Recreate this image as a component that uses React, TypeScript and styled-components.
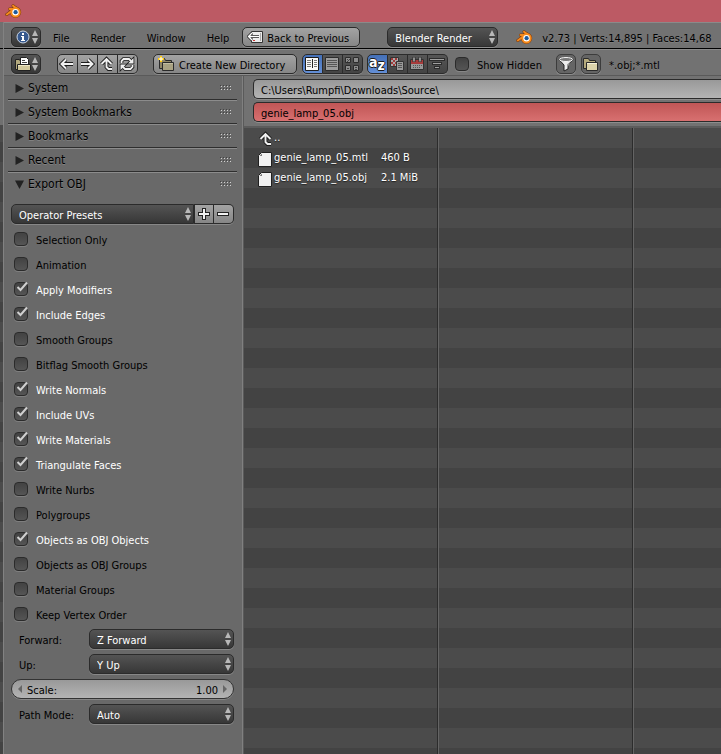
import React from "react";
import styled, { createGlobalStyle, css } from "styled-components";

const Global = createGlobalStyle`
  *, *::before, *::after { box-sizing: border-box; }
  html, body, #root { margin: 0; min-height: 100vh; }
  body { background: #4b4b4b; overflow: hidden; }
  body, button, input, select {
    font: 11px/20px "DejaVu Sans Condensed", "DejaVu Sans", sans-serif;
    color: #000;
  }
  svg { display: block; flex: none; }
`;

const Window = styled.div`
  display: flex;
  flex-direction: column;
  min-height: 100vh;
`;

const TitleBar = styled.header`
  display: flex;
  align-items: center;
  height: 22px;
  padding-left: 5px;
  background: #bc5a64;
`;

const Workspace = styled.div`
  display: grid;
  grid-template-columns: 3px minmax(0, 1fr);
  flex: 1;
`;

const Neighbour = styled.div`
  display: grid;
  grid-template-rows: 27px 76px 1fr;
  background: repeating-linear-gradient(#434343 0 20px, #4b4b4b 20px 40px);
  &::before, &::after { content: ""; background: #707070; }
  &::before { border-bottom: 1px solid #000; }
`;

const Screen = styled.div`
  display: flex;
  flex-direction: column;
  min-width: 0;
  border-left: 1px solid #828282;
`;

const Bar = styled.div<{ $last?: boolean }>`
  display: flex;
  align-items: center;
  height: 27px;
  padding: 3px 0 0 7px;
  overflow: hidden;
  white-space: nowrap;
  background: #727272;
  border-top: 1px solid #8a8a8a;
  border-bottom: 1px solid ${(p) => (p.$last ? "#5a5a5a" : "#000")};
`;

const control = css`
  display: flex;
  align-items: center;
  flex: none;
  height: 20px;
  margin: 0;
  padding: 0 4px;
  border: 1px solid #2b2b2b;
  border-radius: 5px;
  box-shadow: 0 1px 0 rgba(255, 255, 255, 0.2);
  line-height: 18px;
`;

const darkFace = css`
  color: #fff;
  background: linear-gradient(#545454, #373737);
`;

const Caption = styled.span`
  line-height: 16px;
  padding-top: 3px;
`;

const IconMenu = styled.button`
  ${control}
  ${darkFace}
  justify-content: space-between;
  width: 30px;
  padding: 0 1px 0 3px;
`;

const Menus = styled.nav`
  display: flex;
  gap: 21px;
  margin: 0 13px 0 12px;
`;

const MenuItem = styled.button`
  padding: 3px 0 0;
  border: 0;
  background: none;
  line-height: 16px;
  text-shadow: 0 1px 0 #808080;
`;

const Button = styled.button<{ $width: number }>`
  ${control}
  gap: 4px;
  width: ${(p) => p.$width}px;
  background: linear-gradient(#a3a3a3, #868686);
`;

const Picker = styled.div<{ $width?: number; $joined?: boolean }>`
  position: relative;
  display: flex;
  flex: ${(p) => (p.$width ? "none" : "1")};
  width: ${(p) => (p.$width ? `${p.$width}px` : "auto")};
  select {
    ${control}
    ${darkFace}
    flex: 1;
    min-width: 0;
    padding: 2px 16px 0 7px;
    appearance: none;
    border-radius: ${(p) => (p.$joined ? "5px 0 0 5px" : "5px")};
  }
  svg { position: absolute; right: 2px; top: 3px; pointer-events: none; }
`;

const Group = styled.div<{ $after: number }>`
  display: flex;
  flex: none;
  margin-right: ${(p) => p.$after}px;
`;

const Segment = styled.button<{ $tone: "light" | "dark" | "on" }>`
  ${control}
  width: 20px;
  padding: 0 0 0 1px;
  border-radius: 0;
  background: ${(p) =>
    ({
      light: "linear-gradient(#a3a3a3, #868686)",
      dark: "linear-gradient(#565656, #444444)",
      on: "linear-gradient(#4470b8, #648fd6)",
    })[p.$tone]};
  & + & { border-left-width: 0; }
  &:first-child { border-radius: 5px 0 0 5px; width: 21px; }
  &:last-child { border-radius: 0 5px 5px 0; }
`;

const Toggle = styled.button<{ $after: number }>`
  ${control}
  justify-content: center;
  width: 20px;
  padding: 0;
  margin-right: ${(p) => p.$after}px;
  border-color: #3c3c3c;
  background: #656565;
`;

const Info = styled.span`
  padding-top: 3px;
  line-height: 16px;
  text-shadow: 0 1px 0 #808080;
`;

const CheckLabel = styled.label<{ $on?: boolean }>`
  display: flex;
  align-items: center;
  flex: none;
  gap: 8px;
  height: 20px;
  color: ${(p) => (p.$on ? "#fff" : "#000")};
`;

const CheckBox = styled.span`
  position: relative;
  display: flex;
  width: 14px;
  height: 14px;
  input {
    width: 14px;
    height: 14px;
    margin: 0;
    appearance: none;
    border: 1px solid #2b2b2b;
    border-radius: 4px;
    background: linear-gradient(#424242, #555555);
    box-shadow: 0 1px 0 rgba(255, 255, 255, 0.15);
  }
  svg { position: absolute; left: 2px; top: -1px; pointer-events: none; }
`;

const Body = styled.div`
  display: grid;
  grid-template-columns: 239px minmax(0, 1fr);
  flex: 1;
`;

const Sidebar = styled.aside`
  background: #696969;
  border-right: 1px solid #808080;
  padding: 0 5px 20px 4px;
`;

const PanelHeader = styled.button<{ $open?: boolean }>`
  display: flex;
  align-items: center;
  gap: 4px;
  width: 100%;
  height: 24px;
  padding: ${(p) => (p.$open ? "0 5px 0 7px" : "1px 5px 0 7px")};
  border: 0;
  border-bottom: ${(p) => (p.$open ? "0" : "1px solid #2e2e2e")};
  box-shadow: ${(p) => (p.$open ? "none" : "0 1px 0 #8c8c8c")};
  background: none;
  font-size: 12px;
  text-align: left;
  text-shadow: 0 1px 0 #808080;
  span { flex: 1; }
`;

const Options = styled.form`
  display: flex;
  flex-direction: column;
  gap: 5px;
  margin: 0;
  padding: 8px 3px 0 3px;
`;

const CheckList = styled.div`
  display: flex;
  flex-direction: column;
  gap: 5px;
  padding-left: 3px;
`;

const Field = styled.div`
  display: flex;
  align-items: center;
  height: 20px;
  label { width: 78px; padding: 3px 0 0 8px; line-height: 16px; }
`;

const NumberField = styled.div`
  ${control}
  border-radius: 10px;
  border-color: #333;
  padding: 0 6px;
  gap: 5px;
  background: linear-gradient(#999, #b4b4b4);
  label { padding-top: 3px; line-height: 16px; }
  input {
    flex: 1;
    min-width: 0;
    height: 18px;
    padding: 3px 0 0;
    border: 0;
    background: none;
    text-align: right;
    outline: none;
  }
`;

const Browser = styled.main`
  display: flex;
  flex-direction: column;
  min-width: 0;
  border-left: 1px solid #5a5a5a;
`;

const Paths = styled.div`
  display: flex;
  flex-direction: column;
  gap: 3px;
  padding: 3px 0 4px 9px;
  background: #727272;
  border-bottom: 2px solid #5c5c5c;
`;

const PathInput = styled.input<{ $warn?: boolean }>`
  ${control}
  width: 100%;
  padding: 2px 7px 0;
  border-right: 0;
  border-radius: 5px 0 0 5px;
  outline: none;
  background: ${(p) =>
    p.$warn
      ? "linear-gradient(#c05656, #d87070)"
      : "linear-gradient(#999, #b4b4b4)"};
`;

const Files = styled.div`
  flex: 1;
  display: grid;
  grid-template-columns: 194px 195px 1fr;
  background: repeating-linear-gradient(#4b4b4b 0 20px, #434343 20px 40px);
`;

const Column = styled.ul`
  margin: 0;
  padding: 0;
  list-style: none;
  border-right: 1px solid #2c2c2c;
  box-shadow: 1px 0 0 #646464;
  &:last-child { border: 0; box-shadow: none; }
`;

const FileRow = styled.li`
  display: grid;
  grid-template-columns: 16px 107px 1fr;
  align-items: center;
  height: 20px;
  padding: 0 0 0 14px;
  color: #fff;
  text-shadow: 0 1px 1px #222;
  span { padding-bottom: 2px; }
`;

const UpDown = () => (
  <svg width="8" height="14" viewBox="0 0 8 14" fill="#b8b8b8">
    <path d="M4 0 7 6H1zM4 14 1 8h6z" />
  </svg>
);

const BlenderLogo = () => (
  <svg width="17" height="14" viewBox="0 0 17 14">
    <g fill="none" stroke="#7a3a10" strokeWidth="3" strokeLinecap="round">
      <path d="M4.500 5h5M8 1.800l5 3.800M1.800 10.500 6.500 7" />
      <circle cx="10.500" cy="8.200" r="4.200" />
    </g>
    <g fill="none" stroke="#f58a1c" strokeWidth="2" strokeLinecap="round">
      <path d="M4.500 5h5M8 1.800l5 3.800M1.800 10.500 6.500 7" />
      <circle cx="10.500" cy="8.200" r="4.200" fill="#fff" />
    </g>
    <circle cx="10.600" cy="8.200" r="2.100" fill="#1c5a9c" />
  </svg>
);

const InfoIcon = () => (
  <svg width="16" height="14" viewBox="0 0 16 14">
    <circle cx="8" cy="7" r="6" fill="#35588e" stroke="#c9d4e4" />
    <path d="M7 3h2v2H7zM6 6h3v4h1v1H6v-1h1V7H6z" fill="#fff" />
  </svg>
);

const FileBrowserIcon = () => (
  <svg width="16" height="16" viewBox="0 0 16 16">
    <path d="M.500 3.500h4l1 2v8h-5z" fill="#b3a97e" stroke="#222" />
    <path d="M5.500 1.500h6l2 2v6h-8z" fill="#fff" stroke="#222" />
    <path d="M7 4.500h3M7 6.500h5" stroke="#444" />
    <path d="M2.500 8.500h13v6h-13z" fill="#d2c89c" stroke="#222" />
    <path d="M3 9.500h12" stroke="#ece5c4" />
  </svg>
);

const arrowPaths = {
  back: "M14 8H3M7 3.5 2.5 8 7 12.5",
  forward: "M2 8h11M9 3.5 13.5 8 9 12.5",
  parent: "M13 13H9.500L7.500 11V3.500M2.500 8 7.500 3l5 5",
};

const Arrow = ({ kind }: { kind: keyof typeof arrowPaths }) => (
  <svg width="16" height="16" viewBox="0 0 16 16" fill="none">
    <path d={arrowPaths[kind]} stroke="#1c1c1c" strokeWidth="3.8" />
    <path d={arrowPaths[kind]} stroke="#f0f0f0" strokeWidth="1.9" />
  </svg>
);

const Refresh = () => {
  const shafts = "M2.500 7V5L4.500 3H10L12 5M13.500 9v2l-2 2H6L4 11";
  const heads = "M14.500 2v5.500H9zM1.500 14V8.500H7z";
  return (
    <svg width="16" height="16" viewBox="0 0 16 16" fill="none">
      <path d={shafts} stroke="#1c1c1c" strokeWidth="3.600" />
      <path d={heads} fill="#1c1c1c" stroke="#1c1c1c" strokeWidth="1.600" />
      <path d={shafts} stroke="#f0f0f0" strokeWidth="1.800" />
      <path d={heads} fill="#f0f0f0" />
    </svg>
  );
};

const BackIcon = () => (
  <svg width="16" height="14" viewBox="0 0 16 14">
    <path d="M4.500 1.500h11v11h-11z" fill="#ececec" stroke="#333" />
    <path d="M13.500 3v8" stroke="#aaa" />
    <path d="M12 6.500H2M5 3 1.500 6.500 5 10" fill="none" stroke="#222" strokeWidth="3" />
    <path d="M12 6.500H2M5 3 1.500 6.500 5 10" fill="none" stroke="#fff" strokeWidth="1.400" />
    <path d="M6 10.500h2" stroke="#c33" />
  </svg>
);

const Folder = ({ star }: { star?: boolean }) => (
  <svg width="17" height="16" viewBox="0 0 17 16">
    <path d="M1.500 12.500v-10h5l1 2h6v8z" fill={star ? "#8f8667" : "#b5aa7c"} stroke="#2a2a2a" />
    <path d="M4.500 6.500h11v8h-11z" fill={star ? "#a9a283" : "#dcd3aa"} stroke="#2a2a2a" />
    <path d="M5 7.500h10" stroke={star ? "#c4bea2" : "#f6f1da"} />
    {star && <path d="M3 0v6M0 3h6" stroke="#ffc800" strokeWidth="2" />}
    {star && <path d="M3 1v4M1 3h4" stroke="#fff" />}
  </svg>
);

const ShortList = () => (
  <svg width="16" height="16" viewBox="0 0 16 16">
    <path d="M1.500 1.500h13v13h-13z" fill="#f8f8f8" stroke="#1c1c1c" />
    <path d="M3 4.500h4M3 6.500h4M3 8.500h4M3 10.500h4M10 4.500h3M10 6.500h3M10 8.500h3M10 10.500h3" stroke="#777" />
    <path d="M8.500 3v9" stroke="#222" />
  </svg>
);

const LongList = () => (
  <svg width="16" height="16" viewBox="0 0 16 16">
    <path d="M1.500 1.500h13v13h-13z" fill="#9c9c9c" stroke="#2c2c2c" />
    <path d="M3 4.500h10M3 6.500h10M3 8.500h10M3 10.500h10" stroke="#555" />
  </svg>
);

const Thumbs = () => (
  <svg width="16" height="16" viewBox="0 0 16 16" fill="#8c8c8c" stroke="#2c2c2c">
    <path d="M1.500 1.500h5v5h-5zM9.500 1.500h5v5h-5zM1.500 9.500h5v5h-5zM9.500 9.500h5v5h-5z" />
    <path d="M3 3h1v1H3zM4 4h1v1H4zM5 3h1v1H5zM3 5h1v1H3zM3 12h2v1H3zM11 11h2v1h-2zM11 13h2v1h-2z" fill="#444" stroke="none" />
  </svg>
);

const AzGlyph = styled.span`
  display: flex;
  font: bold 14px/14px "DejaVu Sans Condensed", "DejaVu Sans", sans-serif;
  color: #fff;
  text-shadow: 1px 0 #1b1b1b, -1px 0 #1b1b1b, 0 1px #1b1b1b, 0 -1px #1b1b1b;
  span:first-child { padding-bottom: 4px; }
  span:last-child { padding-top: 3px; }
`;

const TypeSort = () => (
  <svg width="16" height="16" viewBox="0 0 16 16">
    <path d="M1.500 1.500h8v9h-8z" fill="#aaa" stroke="#333" />
    <path d="M2 2h2v2H2zM6 2h2v2H6zM4 4h2v2H4zM2 6h2v2H2zM6 6h2v2H6zM4 8h2v2H4z" fill="#a33a3a" />
    <path d="M7.500 5.500h7v9h-7z" fill="#999" stroke="#333" />
    <path d="M9 7.500h4M9 9.500h4M9 11.500h4" stroke="#555" />
  </svg>
);

const DateSort = () => (
  <svg width="16" height="16" viewBox="0 0 16 16">
    <path d="M1.500 3.500h13v10h-13z" fill="#999" stroke="#333" />
    <path d="M2 4h12v4H2z" fill="#a83c3c" />
    <path d="M5 1v5M11 1v5" stroke="#2c2c2c" strokeWidth="3" />
    <path d="M5 1.500v4M11 1.500v4" stroke="#bbb" strokeWidth="1.400" />
    <path d="M4 9.500h9M4 11.500h7" stroke="#555" strokeDasharray="1 1" />
  </svg>
);

const SizeSort = () => (
  <svg width="16" height="16" viewBox="0 0 16 16">
    <path d="M0 3.500h16M3 7.500h10M5 11.500h6" stroke="#2c2c2c" strokeWidth="3" />
    <path d="M1 3.500h14M4 7.500h8M6 11.500h4" stroke="#a0a0a0" />
  </svg>
);

const Funnel = () => (
  <svg width="16" height="16" viewBox="0 0 16 16">
    <path d="M1 3.500 6 9v6l4-2V9l5-5.500z" fill="#ececec" stroke="#222" />
    <path d="M9 8.500v4l3.500-7z" fill="#999" />
    <ellipse cx="8" cy="3.500" rx="6.500" ry="2" fill="#777" stroke="#f4f4f4" />
  </svg>
);

const Sign = ({ plus }: { plus?: boolean }) => {
  const d = plus ? "M8 4v8M4 8h8" : "M4 8h8";
  return (
    <svg width="16" height="16" viewBox="0 0 16 16">
      <path d={d} stroke="#222" strokeWidth="4" strokeLinecap="square" />
      <path d={d} stroke="#f2f2f2" strokeWidth="2" strokeLinecap="square" />
    </svg>
  );
};

const Paper = () => (
  <svg width="14" height="16" viewBox="0 0 14 16">
    <path d="M.500 4.500l3-3h10v14H.500z" fill="#f0f0f0" stroke="#202020" />
    <path d="M1.500 5h2.500V2.500z" fill="#777" />
  </svg>
);

const Grip = () => (
  <svg width="12" height="6" viewBox="0 0 12 6">
    {[0, 3, 6, 9].map((x) =>
      [0, 3].map((y) => (
        <g key={`${x}-${y}`}>
          <path d={`M${x} ${y}h1v1h-1z`} fill="#444" />
          <path d={`M${x + 1} ${y + 1}h1v1h-1z`} fill="#d0d0d0" />
        </g>
      ))
    )}
  </svg>
);

const Disclosure = ({ open }: { open?: boolean }) => (
  <svg width="9" height="9" viewBox="0 0 9 9" fill="#222">
    <path d={open ? "M0 .500h9L4.500 9z" : "M.500 0v9L9 4.500z"} />
  </svg>
);

const Check = ({ label, on }: { label: string; on?: boolean }) => (
  <CheckLabel $on={on}>
    <CheckBox>
      <input type="checkbox" defaultChecked={on} />
      {on && (
        <svg width="13" height="12" viewBox="0 0 13 12">
          <path d="M1.500 6 4.500 9 11 1.500" fill="none" stroke="#d0d0d0" strokeWidth="2" />
        </svg>
      )}
    </CheckBox>
    <Caption>{label}</Caption>
  </CheckLabel>
);

const Select = ({ id, label, value, width, joined }: {
  id?: string; label?: string; value: string; width?: number; joined?: boolean;
}) => (
  <Picker $width={width} $joined={joined}>
    <select id={id} aria-label={label}><option>{value}</option></select>
    <UpDown />
  </Picker>
);

const PresetRow = styled.div`
  display: flex;
`;

const options: [string, boolean][] = [
  ["Selection Only", false],
  ["Animation", false],
  ["Apply Modifiers", true],
  ["Include Edges", true],
  ["Smooth Groups", false],
  ["Bitflag Smooth Groups", false],
  ["Write Normals", true],
  ["Include UVs", true],
  ["Write Materials", true],
  ["Triangulate Faces", true],
  ["Write Nurbs", false],
  ["Polygroups", false],
  ["Objects as OBJ Objects", true],
  ["Objects as OBJ Groups", false],
  ["Material Groups", false],
  ["Keep Vertex Order", false],
];

const files = [
  ["genie_lamp_05.mtl", "460 B"],
  ["genie_lamp_05.obj", "2.1 MiB"],
];

const Spacer = styled.div<{ $w: number }>`
  flex: none;
  width: ${(p) => p.$w}px;
`;

export default function App() {
  return (
    <Window>
      <Global />
      <TitleBar><BlenderLogo /></TitleBar>
      <Workspace>
        <Neighbour />
        <Screen>
          <Bar>
            <IconMenu aria-label="Editor type: Info"><InfoIcon /><UpDown /></IconMenu>
            <Menus>
              {["File", "Render", "Window", "Help"].map((m) => <MenuItem key={m}>{m}</MenuItem>)}
            </Menus>
            <Button $width={118}><BackIcon /><Caption>Back to Previous</Caption></Button>
            <Spacer $w={27} />
            <Select label="Render engine" value="Blender Render" width={111} />
            <Spacer $w={18} />
            <BlenderLogo />
            <Spacer $w={9} />
            <Info>v2.73 | Verts:14,895 | Faces:14,68</Info>
          </Bar>
          <Bar $last>
            <IconMenu aria-label="Editor type: File Browser"><FileBrowserIcon /><UpDown /></IconMenu>
            <Spacer $w={16} />
            <Group $after={15}>
              <Segment $tone="light" aria-label="Back"><Arrow kind="back" /></Segment>
              <Segment $tone="light" aria-label="Forward"><Arrow kind="forward" /></Segment>
              <Segment $tone="light" aria-label="Parent folder"><Arrow kind="parent" /></Segment>
              <Segment $tone="light" aria-label="Refresh"><Refresh /></Segment>
            </Group>
            <Button $width={144}><Folder star /><Caption>Create New Directory</Caption></Button>
            <Spacer $w={5} />
            <Group $after={4}>
              <Segment $tone="on" aria-label="Short list"><ShortList /></Segment>
              <Segment $tone="dark" aria-label="Long list"><LongList /></Segment>
              <Segment $tone="dark" aria-label="Thumbnails"><Thumbs /></Segment>
            </Group>
            <Group $after={7}>
              <Segment $tone="on" aria-label="Sort by name"><AzGlyph><span>a</span><span>z</span></AzGlyph></Segment>
              <Segment $tone="dark" aria-label="Sort by type"><TypeSort /></Segment>
              <Segment $tone="dark" aria-label="Sort by date"><DateSort /></Segment>
              <Segment $tone="dark" aria-label="Sort by size"><SizeSort /></Segment>
            </Group>
            <Check label="Show Hidden" />
            <Spacer $w={14} />
            <Toggle $after={5} aria-label="Filter"><Funnel /></Toggle>
            <Toggle $after={8} aria-label="Show folders"><Folder /></Toggle>
            <Info>*.obj;*.mtl</Info>
          </Bar>
          <Body>
            <Sidebar>
              {["System", "System Bookmarks", "Bookmarks", "Recent"].map((p) => (
                <PanelHeader key={p}><Disclosure /><span>{p}</span><Grip /></PanelHeader>
              ))}
              <PanelHeader $open><Disclosure open /><span>Export OBJ</span><Grip /></PanelHeader>
              <Options>
                <PresetRow>
                  <Select label="Operator presets" value="Operator Presets" joined />
                  <Segment type="button" $tone="light" aria-label="Add preset"><Sign plus /></Segment>
                  <Segment type="button" $tone="light" aria-label="Remove preset"><Sign /></Segment>
                </PresetRow>
                <CheckList>
                  {options.map(([label, on]) => <Check key={label} label={label} on={on} />)}
                </CheckList>
                <Field><label htmlFor="forward">Forward:</label><Select id="forward" value="Z Forward" /></Field>
                <Field><label htmlFor="up">Up:</label><Select id="up" value="Y Up" /></Field>
                <NumberField>
                  <svg width="4" height="8" viewBox="0 0 4 8" fill="#666"><path d="M4 0v8L0 4z" /></svg>
                  <label htmlFor="scale">Scale:</label>
                  <input id="scale" defaultValue="1.00" />
                  <svg width="4" height="8" viewBox="0 0 4 8" fill="#666"><path d="M0 0v8l4-4z" /></svg>
                </NumberField>
                <Field><label htmlFor="path">Path Mode:</label><Select id="path" value="Auto" /></Field>
              </Options>
            </Sidebar>
            <Browser>
              <Paths>
                <PathInput aria-label="Directory" defaultValue={"C:\\Users\\Rumpfi\\Downloads\\Source\\"} />
                <PathInput $warn aria-label="File name" defaultValue="genie_lamp_05.obj" />
              </Paths>
              <Files>
                <Column>
                  <FileRow><Arrow kind="parent" /><span>..</span></FileRow>
                  {files.map(([name, size]) => (
                    <FileRow key={name}><Paper /><span>{name}</span><span>{size}</span></FileRow>
                  ))}
                </Column>
                <Column />
                <Column />
              </Files>
            </Browser>
          </Body>
        </Screen>
      </Workspace>
    </Window>
  );
}
